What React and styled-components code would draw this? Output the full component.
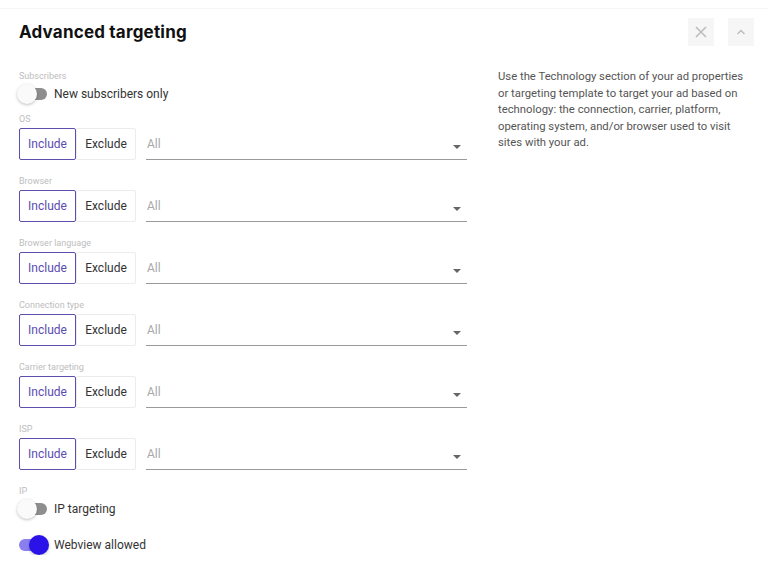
import React from 'react';
import styled, { createGlobalStyle } from 'styled-components';

const GlobalStyle = createGlobalStyle`
  * { box-sizing: border-box; }
  body {
    margin: 0;
    background: #fff;
    font-family: Roboto, "Liberation Sans", sans-serif;
    color: #333;
  }
`;

const Page = styled.div`
  margin-top: 8px;
  border-top: 1px solid #f6f6f6;
  padding: 9px 14px 0 19px;
`;

const Header = styled.header`
  display: flex;
  align-items: center;
  justify-content: space-between;
  height: 28px;
`;

const Title = styled.h1`
  margin: 0;
  font-family: Inter, "Noto Sans", sans-serif;
  font-weight: 700;
  font-size: 17px;
  color: #111;
  letter-spacing: 0.2px;
`;

const HeaderActions = styled.div`
  display: flex;
  gap: 14px;
`;

const IconButton = styled.button`
  width: 26px;
  height: 28px;
  border: none;
  padding: 0;
  background: #f6f6f6;
  display: flex;
  align-items: center;
  justify-content: center;
  color: #bcbcbc;
  cursor: pointer;
`;

const Body = styled.div`
  display: grid;
  grid-template-columns: 448px 1fr;
  column-gap: 31px;
  margin-top: 24px;
`;

const Column = styled.div`
  display: flex;
  flex-direction: column;
`;

const FieldLabel = styled.div`
  font-size: 9px;
  line-height: 12px;
  color: #bdbdbd;
  margin-bottom: ${(p) => p.$gap ?? 3}px;
`;

const SwitchRow = styled.label`
  display: flex;
  align-items: center;
  height: 20px;
  margin-left: -2px;
  margin-bottom: ${(p) => p.$after ?? 0}px;
  font-size: 12px;
  color: #333;
`;

const SwitchBox = styled.span`
  position: relative;
  display: inline-block;
  width: 32px;
  height: 20px;
  margin-right: 5px;
`;

const Track = styled.span`
  position: absolute;
  left: 2px;
  right: 2px;
  top: 4px;
  height: 12px;
  border-radius: 6px;
  background: ${(p) => (p.$on ? '#8b7ff0' : '#8e8e8e')};
`;

const Thumb = styled.span`
  position: absolute;
  top: 0;
  left: ${(p) => (p.$on ? 12 : 0)}px;
  width: 20px;
  height: 20px;
  border-radius: 50%;
  background: ${(p) => (p.$on ? '#2a12e8' : '#fafafa')};
  box-shadow: 0 1px 3px rgba(0, 0, 0, 0.25);
`;

const Group = styled.div`
  margin-bottom: 15px;
`;

const ControlRow = styled.div`
  display: flex;
  align-items: stretch;
  height: 32px;
`;

const Segment = styled.div`
  display: flex;
  margin-right: 10px;
`;

const SegButton = styled.button`
  height: 32px;
  width: ${(p) => p.$w}px;
  padding: 0;
  background: #fff;
  font-family: Roboto, "Liberation Sans", sans-serif;
  font-size: 12px;
  border: 1px solid ${(p) => (p.$active ? '#5d4fae' : '#ececec')};
  border-radius: 2px;
  color: ${(p) => (p.$active ? '#5a4bb0' : '#333')};
  cursor: pointer;
`;

const Select = styled.div`
  flex: 1;
  display: flex;
  align-items: center;
  justify-content: space-between;
  border-bottom: 1px solid #9a9a9a;
  padding: 0 6px 0 1px;
  font-size: 12px;
  color: #a8a8a8;
`;

const Caret = styled.span`
  width: 0;
  height: 0;
  margin-top: 6px;
  border-left: 4px solid transparent;
  border-right: 4px solid transparent;
  border-top: 4px solid #666;
`;

const HelpText = styled.p`
  margin: 0;
  font-size: 11.3px;
  line-height: 16.6px;
  color: #555;
  width: 249px;
  position: relative;
  top: -1px;
`;

const fields = ['OS', 'Browser', 'Browser language', 'Connection type', 'Carrier targeting', 'ISP'];

const Switch = ({ on, label, after }) => (
  <SwitchRow $after={after}>
    <SwitchBox>
      <Track $on={on} />
      <Thumb $on={on} />
    </SwitchBox>
    {label}
  </SwitchRow>
);

const TargetField = ({ label }) => (
  <Group>
    <FieldLabel>{label}</FieldLabel>
    <ControlRow>
      <Segment>
        <SegButton $active $w={57}>Include</SegButton>
        <SegButton $w={60}>Exclude</SegButton>
      </Segment>
      <Select>
        <span>All</span>
        <Caret />
      </Select>
    </ControlRow>
  </Group>
);

export default function App() {
  return (
    <>
      <GlobalStyle />
      <Page>
        <Header>
          <Title>Advanced targeting</Title>
          <HeaderActions>
            <IconButton aria-label="close">
              <svg width="14" height="14" viewBox="0 0 14 14" fill="none" stroke="currentColor" strokeWidth="1.6">
                <path d="M2 2 L12 12 M12 2 L2 12" />
              </svg>
            </IconButton>
            <IconButton aria-label="collapse">
              <svg width="10" height="6" viewBox="0 0 10 6" fill="none" stroke="currentColor" strokeWidth="1.4">
                <path d="M1.5 5 L5 1.5 L8.5 5" />
              </svg>
            </IconButton>
          </HeaderActions>
        </Header>
        <Body>
          <Column>
            <FieldLabel $gap={2}>Subscribers</FieldLabel>
            <Switch label="New subscribers only" after={9} />
            {fields.map((f) => (
              <TargetField key={f} label={f} />
            ))}
            <FieldLabel $gap={2}>IP</FieldLabel>
            <Switch label="IP targeting" after={16} />
            <Switch on label="Webview allowed" />
          </Column>
          <Column>
            <HelpText>
              Use the Technology section of your ad properties or targeting template to target your ad based on
              technology: the connection, carrier, platform, operating system, and/or browser used to visit sites
              with your ad.
            </HelpText>
          </Column>
        </Body>
      </Page>
    </>
  );
}
